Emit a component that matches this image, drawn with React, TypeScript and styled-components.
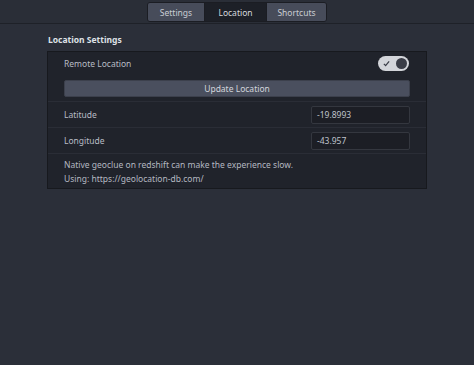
import React from "react";
import styled, { createGlobalStyle } from "styled-components";

const Global = createGlobalStyle`
  html, body { margin: 0; padding: 0; background: #2b2f39; }
  body { font-family: "Noto Sans", "Open Sans", sans-serif; }
  * { box-sizing: border-box; }
`;

const Page = styled.div`
  width: 474px;
  height: 365px;
  background: #2b2f39;
  color: #c3c7cf;
  font-size: 8.5px;
`;

const Header = styled.div`
  height: 24px;
  display: flex;
  justify-content: center;
  align-items: flex-start;
  padding-top: 2px;
  border-bottom: 1px solid #1e2128;
  background: #2a2e37;
`;

const TabGroup = styled.div`
  display: flex;
  border: 1px solid #1b1d23;
  border-radius: 3px;
  overflow: hidden;
`;

const Tab = styled.div<{ $active?: boolean; $width: number }>`
  height: 18px;
  width: ${(p) => p.$width}px;
  display: flex;
  align-items: center;
  justify-content: center;
  font-size: 8.5px;
  color: ${(p) => (p.$active ? "#d6d9df" : "#c9ccd3")};
  background: ${(p) => (p.$active ? "#1d2027" : "#474c5a")};
  border-right: 1px solid #1b1d23;
  &:last-child { border-right: none; }
`;

const Content = styled.div`
  padding: 8px 47px 0 47px;
`;

const Title = styled.div`
  font-weight: bold;
  font-size: 8.5px;
  color: #dfe2e7;
  padding-left: 1px;
  height: 14px;
  margin-bottom: 5px;
  display: flex;
  align-items: center;
`;

const Panel = styled.div`
  background: #20232b;
  border: 1px solid #17191e;
  width: 380px;
  padding: 0 16px;
`;

const Row = styled.div<{ $h: number; $sep?: boolean }>`
  height: ${(p) => p.$h}px;
  display: flex;
  align-items: center;
  justify-content: space-between;
  border-bottom: ${(p) => (p.$sep ? "1px solid #2a2d36" : "none")};
  margin: 0 -16px;
  padding: 0 16px;
`;

const Label = styled.span`
  color: #b8bcc5;
`;

const Button = styled.div`
  height: 17px;
  width: 100%;
  background: #4a4f5e;
  border: 1px solid #3c404c;
  border-radius: 2px;
  display: flex;
  align-items: center;
  justify-content: center;
  color: #d2d5dc;
`;

const Input = styled.div`
  width: 99px;
  height: 18px;
  background: #1c1e25;
  border: 1px solid #34373f;
  border-radius: 2px;
  display: flex;
  align-items: center;
  padding-left: 5px;
  color: #bfc3cb;
`;

const Toggle = styled.div`
  width: 31px;
  height: 15px;
  border-radius: 8px;
  background: #d3d5da;
  position: relative;
  margin-right: 1px;
`;

const Knob = styled.div`
  position: absolute;
  right: 2px;
  top: 2px;
  width: 11px;
  height: 11px;
  border-radius: 50%;
  background: #3a3d47;
`;

const Check = styled.svg`
  position: absolute;
  left: 5px;
  top: 4px;
`;

const Note = styled.div`
  padding: 4px 0 2px 0;
  line-height: 14px;
  color: #b4b8c1;
`;

export default function App() {
  return (
    <Page>
      <Global />
      <Header>
        <TabGroup>
          <Tab $width={57}>Settings</Tab>
          <Tab $active $width={62}>Location</Tab>
          <Tab $width={59}>Shortcuts</Tab>
        </TabGroup>
      </Header>
      <Content>
        <Title>Location Settings</Title>
        <Panel>
          <Row $h={23}>
            <Label>Remote Location</Label>
            <Toggle>
              <Check width="7" height="7" viewBox="0 0 8 8">
                <path d="M1 4.5 L3 6.5 L7 1.5" stroke="#3a3d47" strokeWidth="1.4" fill="none" />
              </Check>
              <Knob />
            </Toggle>
          </Row>
          <Row $h={27} $sep>
            <Button>Update Location</Button>
          </Row>
          <Row $h={26} $sep>
            <Label>Latitude</Label>
            <Input>-19.8993</Input>
          </Row>
          <Row $h={26} $sep>
            <Label>Longitude</Label>
            <Input>-43.957</Input>
          </Row>
          <Note>
            Native geoclue on redshift can make the experience slow.
            <br />
            Using: https://geolocation-db.com/
          </Note>
        </Panel>
      </Content>
    </Page>
  );
}
